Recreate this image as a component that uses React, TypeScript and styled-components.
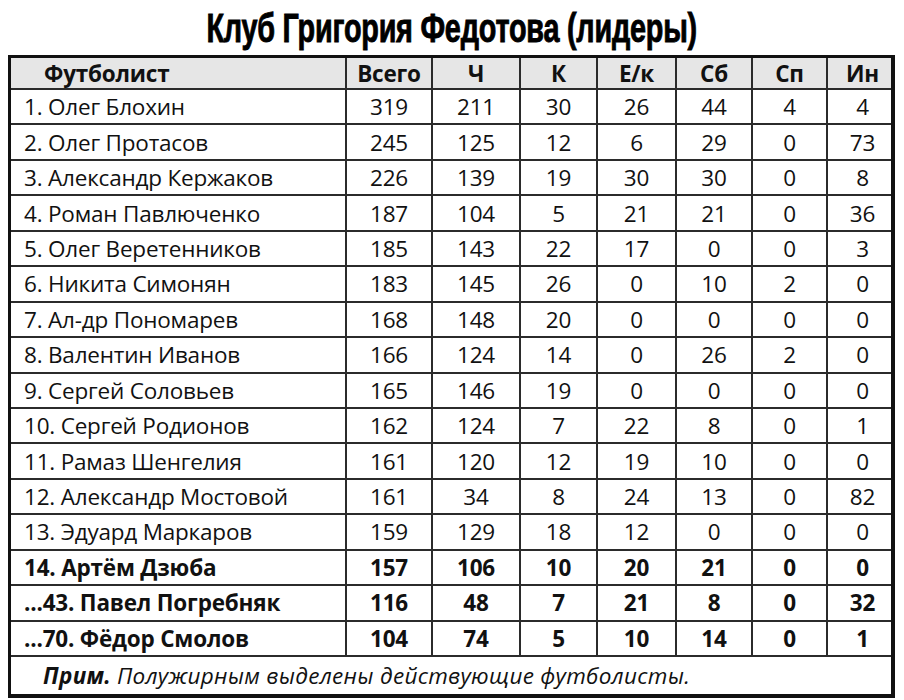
import React from 'react';
import styled, { createGlobalStyle } from 'styled-components';

const GlobalStyle = createGlobalStyle`
	html, body {
		margin: 0;
		padding: 0;
		background: #fff;
	}
	body {
		width: 904px;
		height: 700px;
		overflow: hidden;
		font-family: 'Open Sans', 'Noto Sans', sans-serif;
		color: #111;
	}
`;

const COLS = '336px 86px 88px 77px 79px 76px 75px 63px';

const Page = styled.div`
	display: flex;
	flex-direction: column;
	align-items: center;
`;

const TitleBar = styled.div`
	height: 55px;
	width: 100%;
	display: flex;
	justify-content: center;
	overflow: hidden;
`;

const Title = styled.h1`
	margin: 0;
	line-height: 57px;
	font-family: 'Liberation Sans', Arial, sans-serif;
	font-weight: 700;
	font-size: 40px;
	letter-spacing: -0.3px;
	-webkit-text-stroke: 0.9px #000;
	color: #000;
	white-space: nowrap;
	transform: scaleX(0.72);
	transform-origin: center;
`;

const Table = styled.div`
	width: 887px;
	box-sizing: border-box;
	border: 3px solid #111;
	border-right-width: 4px;
	border-bottom-width: 4px;
	align-self: flex-start;
	margin-left: 8px;
`;

const Row = styled.div<{ $head?: boolean; $bold?: boolean }>`
	display: grid;
	grid-template-columns: ${COLS};
	height: ${(p) => (p.$head ? '32px' : '35.44px')};
	background: ${(p) => (p.$head ? '#e6e6e6' : '#fff')};
	border-bottom: 2px solid #2b2b2b;
	box-sizing: border-box;
	font-weight: ${(p) => (p.$head || p.$bold ? 700 : 400)};
	font-size: 22.5px;
	letter-spacing: -0.2px;
`;

const Cell = styled.div<{ $name?: boolean; $head?: boolean; $last?: boolean }>`
	display: flex;
	align-items: center;
	justify-content: ${(p) => (p.$name ? 'flex-start' : 'center')};
	padding-left: ${(p) => (p.$name ? (p.$head ? '33px' : '13px') : p.$last ? '6px' : '0')};
	border-right: ${(p) => (p.$last ? 'none' : '2px solid #2b2b2b')};
	box-sizing: border-box;
	white-space: nowrap;
	overflow: hidden;
`;

const Note = styled.div`
	height: 37px;
	display: flex;
	align-items: center;
	padding-left: 32px;
	font-size: 22.5px;
	font-style: italic;
	letter-spacing: 0.3px;
	white-space: nowrap;
`;

const NoteMark = styled.b`
	font-weight: 700;
	margin-right: 6px;
`;

const headers = ['Футболист', 'Всего', 'Ч', 'К', 'Е/к', 'Сб', 'Сп', 'Ин'];

type Player = { name: string; stats: number[]; active?: boolean };

const players: Player[] = [
	{ name: '1. Олег Блохин', stats: [319, 211, 30, 26, 44, 4, 4] },
	{ name: '2. Олег Протасов', stats: [245, 125, 12, 6, 29, 0, 73] },
	{ name: '3. Александр Кержаков', stats: [226, 139, 19, 30, 30, 0, 8] },
	{ name: '4. Роман Павлюченко', stats: [187, 104, 5, 21, 21, 0, 36] },
	{ name: '5. Олег Веретенников', stats: [185, 143, 22, 17, 0, 0, 3] },
	{ name: '6. Никита Симонян', stats: [183, 145, 26, 0, 10, 2, 0] },
	{ name: '7. Ал-др Пономарев', stats: [168, 148, 20, 0, 0, 0, 0] },
	{ name: '8. Валентин Иванов', stats: [166, 124, 14, 0, 26, 2, 0] },
	{ name: '9. Сергей Соловьев', stats: [165, 146, 19, 0, 0, 0, 0] },
	{ name: '10. Сергей Родионов', stats: [162, 124, 7, 22, 8, 0, 1] },
	{ name: '11. Рамаз Шенгелия', stats: [161, 120, 12, 19, 10, 0, 0] },
	{ name: '12. Александр Мостовой', stats: [161, 34, 8, 24, 13, 0, 82] },
	{ name: '13. Эдуард Маркаров', stats: [159, 129, 18, 12, 0, 0, 0] },
	{ name: '14. Артём Дзюба', stats: [157, 106, 10, 20, 21, 0, 0], active: true },
	{ name: '...43. Павел Погребняк', stats: [116, 48, 7, 21, 8, 0, 32], active: true },
	{ name: '...70. Фёдор Смолов', stats: [104, 74, 5, 10, 14, 0, 1], active: true },
];

const App: React.FC = () => {
	return (
		<>
			<GlobalStyle />
			<Page>
				<TitleBar>
					<Title>Клуб Григория Федотова (лидеры)</Title>
				</TitleBar>
				<Table>
					<Row $head>
						{headers.map((h, i) => (
							<Cell key={h} $head $name={i === 0} $last={i === headers.length - 1}>
								{h}
							</Cell>
						))}
					</Row>
					{players.map((p) => (
						<Row key={p.name} $bold={p.active}>
							<Cell $name>{p.name}</Cell>
							{p.stats.map((s, i) => (
								<Cell key={i} $last={i === p.stats.length - 1}>
									{s}
								</Cell>
							))}
						</Row>
					))}
					<Note>
						<NoteMark>Прим.</NoteMark>Полужирным выделены действующие футболисты.
					</Note>
				</Table>
			</Page>
		</>
	);
};

export default App;
